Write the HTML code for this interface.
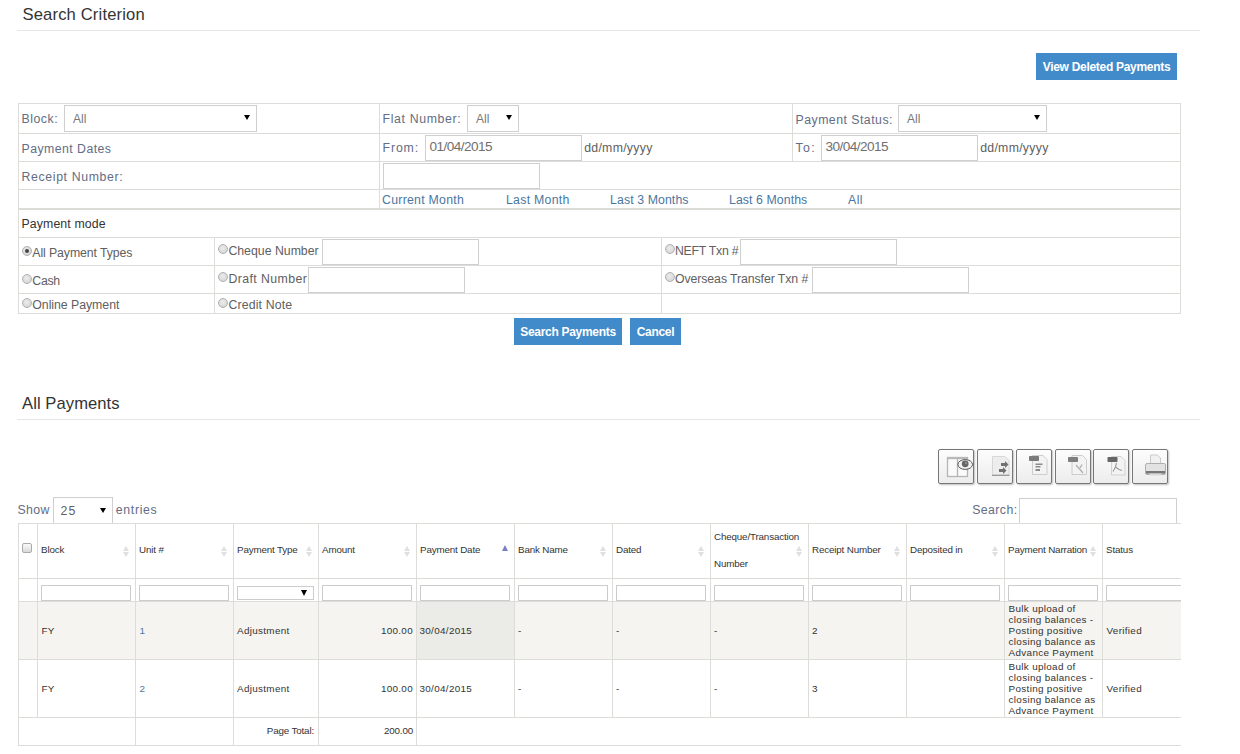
<!DOCTYPE html>
<html><head><meta charset="utf-8"><style>
html,body{margin:0;padding:0;background:#fff;width:1240px;height:754px;overflow:hidden;position:relative}
body{font-family:"Liberation Sans",sans-serif}
.t{position:absolute;white-space:nowrap}
.b{position:absolute;box-sizing:content-box}
.radio{width:8px;height:8px;border-radius:50%;border:1px solid #b0b0b0;background:radial-gradient(circle at 45% 40%,#ececec,#cfcfcf)}
.cbox{width:8px;height:8px;border-radius:2px;border:1px solid #aaa;background:linear-gradient(#fafafa,#d9d9d9)}
.tbtn{width:34px;height:33px;border:1px solid #777;border-radius:2px;background:linear-gradient(#fdfdfd,#ececec);box-shadow:1px 1px 2px rgba(0,0,0,.25)}
</style></head><body>
<div class="t" style="left:22.5px;top:6.95px;font-size:16.6px;line-height:16.6px;color:#333;font-weight:400;letter-spacing:0.15px;">Search Criterion</div>
<div class="b" style="left:17px;top:30px;width:1183px;height:1px;background:#e6e6e6"></div>
<div class="b" style="left:1036px;top:53px;width:141px;height:27px;background:#428bca;"></div>
<div class="t" style="left:1036px;width:141px;text-align:center;top:60.84px;font-size:12px;line-height:12px;color:#fff;font-weight:700;letter-spacing:-0.3px">View Deleted Payments</div>
<div class="b" style="left:18px;top:103px;width:1163px;height:1px;background:#dcdcd8"></div>
<div class="b" style="left:18px;top:133px;width:1163px;height:1px;background:#dcdcd8"></div>
<div class="b" style="left:18px;top:161px;width:1163px;height:1px;background:#dcdcd8"></div>
<div class="b" style="left:18px;top:189px;width:1163px;height:1px;background:#dcdcd8"></div>
<div class="b" style="left:18px;top:208px;width:1163px;height:2px;background:#dcdcd6"></div>
<div class="b" style="left:18px;top:237px;width:1163px;height:1px;background:#dcdcd8"></div>
<div class="b" style="left:18px;top:265px;width:1163px;height:1px;background:#dcdcd8"></div>
<div class="b" style="left:18px;top:293px;width:1163px;height:1px;background:#dcdcd8"></div>
<div class="b" style="left:18px;top:313px;width:1163px;height:1px;background:#dcdcd8"></div>
<div class="b" style="left:18px;top:103px;width:1px;height:211px;background:#dcdcd8"></div>
<div class="b" style="left:1180px;top:103px;width:1px;height:211px;background:#dcdcd8"></div>
<div class="b" style="left:379px;top:103px;width:1px;height:105px;background:#dcdcd8"></div>
<div class="b" style="left:792px;top:103px;width:1px;height:58px;background:#dcdcd8"></div>
<div class="b" style="left:214px;top:237px;width:1px;height:76px;background:#dcdcd8"></div>
<div class="b" style="left:661px;top:237px;width:1px;height:76px;background:#dcdcd8"></div>
<div class="t" style="left:21.6px;top:112.59px;font-size:12.3px;line-height:12.3px;color:#636d84;font-weight:400;letter-spacing:0.5px;">Block:</div>
<div class="b" style="left:64px;top:105px;width:191px;height:25px;border:1px solid #cfcfcf;background:#fff;"></div>
<div class="t" style="left:73px;top:112.54px;font-size:12px;line-height:12px;color:#777;font-weight:400;letter-spacing:0px;">All</div>
<div class="b" style="left:244.0px;top:115px;width:0;height:0;border-left:3.0px solid transparent;border-right:3.0px solid transparent;border-top:5px solid #000"></div>
<div class="t" style="left:382.6px;top:112.59px;font-size:12.3px;line-height:12.3px;color:#636d84;font-weight:400;letter-spacing:0.641px;">Flat Number:</div>
<div class="b" style="left:467px;top:105px;width:50px;height:25px;border:1px solid #cfcfcf;background:#fff;"></div>
<div class="t" style="left:476px;top:112.54px;font-size:12px;line-height:12px;color:#777;font-weight:400;letter-spacing:0px;">All</div>
<div class="b" style="left:506.0px;top:115px;width:0;height:0;border-left:3.0px solid transparent;border-right:3.0px solid transparent;border-top:5px solid #000"></div>
<div class="t" style="left:795.5px;top:113.59px;font-size:12.3px;line-height:12.3px;color:#636d84;font-weight:400;letter-spacing:0.481px;">Payment Status:</div>
<div class="b" style="left:898px;top:105px;width:147px;height:25px;border:1px solid #cfcfcf;background:#fff;"></div>
<div class="t" style="left:907px;top:112.54px;font-size:12px;line-height:12px;color:#777;font-weight:400;letter-spacing:0px;">All</div>
<div class="b" style="left:1034.0px;top:115px;width:0;height:0;border-left:3.0px solid transparent;border-right:3.0px solid transparent;border-top:5px solid #000"></div>
<div class="t" style="left:21.5px;top:142.59px;font-size:12.3px;line-height:12.3px;color:#636d84;font-weight:400;letter-spacing:0.453px;">Payment Dates</div>
<div class="t" style="left:382.6px;top:141.59px;font-size:12.3px;line-height:12.3px;color:#636d84;font-weight:400;letter-spacing:0.85px;">From:</div>
<div class="b" style="left:425px;top:135px;width:155px;height:24px;border:1px solid #cfcfcf;background:#fff;"></div>
<div class="t" style="left:429.4px;top:140.29px;font-size:13.6px;line-height:13.6px;color:#707070;font-weight:400;letter-spacing:-0.55px;">01/04/2015</div>
<div class="t" style="left:584.2px;top:141.59px;font-size:12.3px;line-height:12.3px;color:#606060;font-weight:400;letter-spacing:0.281px;">dd/mm/yyyy</div>
<div class="t" style="left:795.5px;top:141.59px;font-size:12.3px;line-height:12.3px;color:#636d84;font-weight:400;letter-spacing:1.4px;">To:</div>
<div class="b" style="left:821px;top:135px;width:155px;height:24px;border:1px solid #cfcfcf;background:#fff;"></div>
<div class="t" style="left:825.4px;top:140.29px;font-size:13.6px;line-height:13.6px;color:#707070;font-weight:400;letter-spacing:-0.55px;">30/04/2015</div>
<div class="t" style="left:980.2px;top:141.59px;font-size:12.3px;line-height:12.3px;color:#606060;font-weight:400;letter-spacing:0.281px;">dd/mm/yyyy</div>
<div class="t" style="left:21.5px;top:170.59px;font-size:12.3px;line-height:12.3px;color:#636d84;font-weight:400;letter-spacing:0.641px;">Receipt Number:</div>
<div class="b" style="left:383px;top:163px;width:155px;height:24px;border:1px solid #cfcfcf;background:#fff;"></div>
<div class="t" style="left:382px;top:194.29px;font-size:12.3px;line-height:12.3px;color:#4a77a1;font-weight:400;letter-spacing:0.273px;">Current Month</div>
<div class="t" style="left:506px;top:194.29px;font-size:12.3px;line-height:12.3px;color:#4a77a1;font-weight:400;letter-spacing:0.281px;">Last Month</div>
<div class="t" style="left:610px;top:194.29px;font-size:12.3px;line-height:12.3px;color:#4a77a1;font-weight:400;letter-spacing:0.103px;">Last 3 Months</div>
<div class="t" style="left:729px;top:194.29px;font-size:12.3px;line-height:12.3px;color:#4a77a1;font-weight:400;letter-spacing:0.083px;">Last 6 Months</div>
<div class="t" style="left:848px;top:194.29px;font-size:12.3px;line-height:12.3px;color:#4a77a1;font-weight:400;letter-spacing:0.45px;">All</div>
<div class="t" style="left:21.4px;top:218.09px;font-size:12.3px;line-height:12.3px;color:#333;font-weight:400;letter-spacing:0.141px;">Payment mode</div>
<div class="b radio" style="left:22px;top:246px"></div>
<div class="b" style="left:25px;top:249px;width:4px;height:4px;border-radius:50%;background:#444"></div>
<div class="t" style="left:32.3px;top:247.19px;font-size:12.3px;line-height:12.3px;color:#606060;font-weight:400;letter-spacing:-0.098px;">All Payment Types</div>
<div class="b radio" style="left:218px;top:244px"></div>
<div class="t" style="left:228.4px;top:244.89px;font-size:12.3px;line-height:12.3px;color:#606060;font-weight:400;letter-spacing:0.003px;">Cheque Number</div>
<div class="b" style="left:322px;top:239px;width:155px;height:24px;border:1px solid #cfcfcf;background:#fff;"></div>
<div class="b radio" style="left:665px;top:244px"></div>
<div class="t" style="left:675px;top:244.89px;font-size:12.3px;line-height:12.3px;color:#606060;font-weight:400;letter-spacing:-0.259px;">NEFT Txn #</div>
<div class="b" style="left:740px;top:239px;width:155px;height:24px;border:1px solid #cfcfcf;background:#fff;"></div>
<div class="b radio" style="left:22px;top:274px"></div>
<div class="t" style="left:32.3px;top:274.89px;font-size:12.3px;line-height:12.3px;color:#606060;font-weight:400;letter-spacing:-0.267px;">Cash</div>
<div class="b radio" style="left:218px;top:272px"></div>
<div class="t" style="left:228.4px;top:272.89px;font-size:12.3px;line-height:12.3px;color:#606060;font-weight:400;letter-spacing:0.421px;">Draft Number</div>
<div class="b" style="left:308px;top:267px;width:155px;height:24px;border:1px solid #cfcfcf;background:#fff;"></div>
<div class="b radio" style="left:665px;top:272px"></div>
<div class="t" style="left:675px;top:272.89px;font-size:12.3px;line-height:12.3px;color:#606060;font-weight:400;letter-spacing:-0.085px;">Overseas Transfer Txn #</div>
<div class="b" style="left:812px;top:267px;width:155px;height:24px;border:1px solid #cfcfcf;background:#fff;"></div>
<div class="b radio" style="left:22px;top:298px"></div>
<div class="t" style="left:32.3px;top:298.59px;font-size:12.3px;line-height:12.3px;color:#606060;font-weight:400;letter-spacing:-0.033px;">Online Payment</div>
<div class="b radio" style="left:218px;top:298px"></div>
<div class="t" style="left:228.4px;top:298.59px;font-size:12.3px;line-height:12.3px;color:#606060;font-weight:400;letter-spacing:0.15px;">Credit Note</div>
<div class="b" style="left:514px;top:318px;width:108px;height:27px;background:#428bca;"></div>
<div class="t" style="left:514px;width:108px;text-align:center;top:325.54px;font-size:12px;line-height:12px;color:#fff;font-weight:700;letter-spacing:-0.3px">Search Payments</div>
<div class="b" style="left:630px;top:318px;width:51px;height:27px;background:#428bca;"></div>
<div class="t" style="left:630px;width:51px;text-align:center;top:325.54px;font-size:12px;line-height:12px;color:#fff;font-weight:700;letter-spacing:-0.3px">Cancel</div>
<div class="t" style="left:22px;top:395.75px;font-size:16.6px;line-height:16.6px;color:#333;font-weight:400;letter-spacing:0.07px;">All Payments</div>
<div class="b" style="left:17px;top:419px;width:1183px;height:1px;background:#e6e6e6"></div>
<div class="b tbtn" style="left:938px;top:449px"></div>
<svg class="b" style="left:938px;top:449px" width="36" height="35" viewBox="0 0 36 35"><rect x="9.5" y="8.5" width="20" height="19" fill="#fafafa" stroke="#b5b5b5" stroke-width="1.3"/><rect x="9" y="8" width="21" height="2.2" fill="#b8b8b8"/><line x1="19.5" y1="9" x2="19.5" y2="27" stroke="#b5b5b5" stroke-width="1.3"/><ellipse cx="27.2" cy="15.5" rx="7.3" ry="4.9" fill="#f2f2f2" stroke="#555" stroke-width="1"/><circle cx="27.2" cy="14.8" r="3.4" fill="#666"/><circle cx="28" cy="14" r="1" fill="#999"/></svg>
<div class="b tbtn" style="left:977px;top:449px"></div>
<svg class="b" style="left:977px;top:449px" width="36" height="35" viewBox="0 0 36 35"><path d="M15.5 7.5 H28 L32 11.5 V26 H15.5 Z" fill="#ededed" stroke="#cfcfcf" stroke-width="0.8"/><line x1="15" y1="26.3" x2="32.5" y2="26.3" stroke="#888" stroke-width="1"/><path d="M24 14 h4 v-2 l3.5 3.5 -3.5 3.5 v-2 h-4z" fill="#707070"/><path d="M22 20 h4 v-2 l3.5 3.5 -3.5 3.5 v-2 h-4z" fill="#707070"/></svg>
<div class="b tbtn" style="left:1016px;top:449px"></div>
<svg class="b" style="left:1016px;top:449px" width="36" height="35" viewBox="0 0 36 35"><path d="M16.5 6.5 H27 L31 10.5 V25.5 H16.5 Z" fill="#f3f3f3" stroke="#c8c8c8" stroke-width="0.9"/><rect x="13" y="7" width="10" height="5" rx="0.8" fill="#7a7a7a"/><rect x="19.5" y="14.5" width="7" height="1.5" fill="#8a8a8a"/><rect x="19.5" y="17" width="5" height="1.5" fill="#8a8a8a"/><rect x="19.5" y="20" width="4.5" height="2" fill="#8a8a8a"/></svg>
<div class="b tbtn" style="left:1055px;top:449px"></div>
<svg class="b" style="left:1055px;top:449px" width="36" height="35" viewBox="0 0 36 35"><path d="M17 6.5 H27.5 L31.5 10.5 V25.5 H17 Z" fill="#f3f3f3" stroke="#c8c8c8" stroke-width="0.9"/><rect x="13" y="8" width="10" height="5" rx="0.8" fill="#7f7f7f"/><path d="M21 16 L28 24 M27 15.5 L25 19" stroke="#b0b0b0" stroke-width="1.3" fill="none"/></svg>
<div class="b tbtn" style="left:1093px;top:449px"></div>
<svg class="b" style="left:1093px;top:449px" width="36" height="35" viewBox="0 0 36 35"><path d="M18.5 7.5 H28 L32 11.5 V26 H18.5 Z" fill="#f3f3f3" stroke="#cdcdcd" stroke-width="0.9"/><rect x="14.5" y="8" width="10" height="5" rx="0.8" fill="#666"/><path d="M23.5 14 L22.5 18 L20 22.5 M22.5 18 L26 20.5 L29 21.5" stroke="#9a9a9a" stroke-width="1.1" fill="none"/></svg>
<div class="b tbtn" style="left:1132px;top:449px"></div>
<svg class="b" style="left:1132px;top:449px" width="36" height="35" viewBox="0 0 36 35"><path d="M18.5 6 H25.5 L28.5 9 V15 H18.5 Z" fill="#f0f0f0" stroke="#c6c6c6" stroke-width="0.9"/><path d="M15 14.5 H32.5 Q33.5 14.5 33.5 16 V24 Q33.5 25.5 32 25.5 H15 Q13.5 25.5 13.5 24 V16 Q13.5 14.5 15 14.5 Z" fill="#e2e2e2" stroke="#a8a8a8" stroke-width="0.9"/><rect x="14" y="22" width="19" height="2.6" fill="#777"/><rect x="17.5" y="24.5" width="12" height="2" fill="#d8d8d8"/></svg>
<div class="t" style="left:17.4px;top:503.59px;font-size:12.3px;line-height:12.3px;color:#636d84;font-weight:400;letter-spacing:0.433px;">Show</div>
<div class="b" style="left:53px;top:497px;width:58px;height:25px;border:1px solid #cfcfcf;background:#fff;"></div>
<div class="t" style="left:60.6px;top:504.59px;font-size:12.3px;line-height:12.3px;color:#606060;font-weight:400;letter-spacing:1.0px;">25</div>
<div class="b" style="left:100.0px;top:508px;width:0;height:0;border-left:3.0px solid transparent;border-right:3.0px solid transparent;border-top:5px solid #000"></div>
<div class="t" style="left:115.8px;top:503.59px;font-size:12.3px;line-height:12.3px;color:#636d84;font-weight:400;letter-spacing:0.667px;">entries</div>
<div class="t" style="left:972.2px;top:503.59px;font-size:12.3px;line-height:12.3px;color:#636d84;font-weight:400;letter-spacing:0.417px;">Search:</div>
<div class="b" style="left:1019px;top:498px;width:156px;height:24px;border:1px solid #cfcfcf;background:#fff;"></div>
<div class="b" style="left:18px;top:601px;width:1163px;height:58px;background:#f5f4f0;"></div>
<div class="b" style="left:416px;top:601px;width:98px;height:58px;background:#ebebe7;"></div>
<div class="b" style="left:18px;top:523px;width:1163px;height:1px;background:#dcdcd8"></div>
<div class="b" style="left:18px;top:578px;width:1163px;height:1px;background:#dcdcd8"></div>
<div class="b" style="left:18px;top:601px;width:1163px;height:1px;background:#dcdcd8"></div>
<div class="b" style="left:18px;top:659px;width:1163px;height:1px;background:#dcdcd8"></div>
<div class="b" style="left:18px;top:717px;width:1163px;height:1px;background:#dcdcd8"></div>
<div class="b" style="left:18px;top:745px;width:1169px;height:1px;background:#dcdcd8"></div>
<div class="b" style="left:18px;top:523px;width:1px;height:194px;background:#dcdcd8"></div>
<div class="b" style="left:37px;top:523px;width:1px;height:194px;background:#dcdcd8"></div>
<div class="b" style="left:135px;top:523px;width:1px;height:194px;background:#dcdcd8"></div>
<div class="b" style="left:233px;top:523px;width:1px;height:194px;background:#dcdcd8"></div>
<div class="b" style="left:318px;top:523px;width:1px;height:194px;background:#dcdcd8"></div>
<div class="b" style="left:416px;top:523px;width:1px;height:194px;background:#dcdcd8"></div>
<div class="b" style="left:514px;top:523px;width:1px;height:194px;background:#dcdcd8"></div>
<div class="b" style="left:612px;top:523px;width:1px;height:194px;background:#dcdcd8"></div>
<div class="b" style="left:710px;top:523px;width:1px;height:194px;background:#dcdcd8"></div>
<div class="b" style="left:808px;top:523px;width:1px;height:194px;background:#dcdcd8"></div>
<div class="b" style="left:906px;top:523px;width:1px;height:194px;background:#dcdcd8"></div>
<div class="b" style="left:1004px;top:523px;width:1px;height:194px;background:#dcdcd8"></div>
<div class="b" style="left:1102px;top:523px;width:1px;height:194px;background:#dcdcd8"></div>
<div class="b" style="left:18px;top:717px;width:1px;height:29px;background:#dcdcd8"></div>
<div class="b" style="left:135px;top:717px;width:1px;height:29px;background:#dcdcd8"></div>
<div class="b" style="left:233px;top:717px;width:1px;height:29px;background:#dcdcd8"></div>
<div class="b" style="left:318px;top:717px;width:1px;height:29px;background:#dcdcd8"></div>
<div class="b" style="left:416px;top:717px;width:1px;height:29px;background:#dcdcd8"></div>
<div class="t" style="left:41px;top:545.40px;font-size:9.8px;line-height:9.8px;color:#333;font-weight:400;letter-spacing:-0.15px;">Block</div>
<div class="t" style="left:139px;top:545.40px;font-size:9.8px;line-height:9.8px;color:#333;font-weight:400;letter-spacing:-0.15px;">Unit #</div>
<div class="t" style="left:237px;top:545.40px;font-size:9.8px;line-height:9.8px;color:#333;font-weight:400;letter-spacing:-0.15px;">Payment Type</div>
<div class="t" style="left:322px;top:545.40px;font-size:9.8px;line-height:9.8px;color:#333;font-weight:400;letter-spacing:-0.15px;">Amount</div>
<div class="t" style="left:420px;top:545.40px;font-size:9.8px;line-height:9.8px;color:#333;font-weight:400;letter-spacing:-0.15px;">Payment Date</div>
<div class="t" style="left:518px;top:545.40px;font-size:9.8px;line-height:9.8px;color:#333;font-weight:400;letter-spacing:-0.15px;">Bank Name</div>
<div class="t" style="left:616px;top:545.40px;font-size:9.8px;line-height:9.8px;color:#333;font-weight:400;letter-spacing:-0.15px;">Dated</div>
<div class="t" style="left:714px;top:532.20px;font-size:9.8px;line-height:9.8px;color:#333;font-weight:400;letter-spacing:-0.15px;">Cheque/Transaction</div>
<div class="t" style="left:714px;top:559.20px;font-size:9.8px;line-height:9.8px;color:#333;font-weight:400;letter-spacing:-0.15px;">Number</div>
<div class="t" style="left:812px;top:545.40px;font-size:9.8px;line-height:9.8px;color:#333;font-weight:400;letter-spacing:-0.15px;">Receipt Number</div>
<div class="t" style="left:910px;top:545.40px;font-size:9.8px;line-height:9.8px;color:#333;font-weight:400;letter-spacing:-0.15px;">Deposited in</div>
<div class="t" style="left:1008px;top:545.40px;font-size:9.8px;line-height:9.8px;color:#333;font-weight:400;letter-spacing:-0.15px;">Payment Narration</div>
<div class="t" style="left:1106px;top:545.40px;font-size:9.8px;line-height:9.8px;color:#333;font-weight:400;letter-spacing:-0.15px;">Status</div>
<div class="b cbox" style="left:22px;top:543px"></div>
<div class="b" style="left:123px;top:546px;width:0;height:0;border-left:3.5px solid transparent;border-right:3.5px solid transparent;border-bottom:5px solid #e0e0e0"></div>
<div class="b" style="left:123px;top:552px;width:0;height:0;border-left:3.5px solid transparent;border-right:3.5px solid transparent;border-top:5px solid #e0e0e0"></div>
<div class="b" style="left:221px;top:546px;width:0;height:0;border-left:3.5px solid transparent;border-right:3.5px solid transparent;border-bottom:5px solid #e0e0e0"></div>
<div class="b" style="left:221px;top:552px;width:0;height:0;border-left:3.5px solid transparent;border-right:3.5px solid transparent;border-top:5px solid #e0e0e0"></div>
<div class="b" style="left:306px;top:546px;width:0;height:0;border-left:3.5px solid transparent;border-right:3.5px solid transparent;border-bottom:5px solid #e0e0e0"></div>
<div class="b" style="left:306px;top:552px;width:0;height:0;border-left:3.5px solid transparent;border-right:3.5px solid transparent;border-top:5px solid #e0e0e0"></div>
<div class="b" style="left:404px;top:546px;width:0;height:0;border-left:3.5px solid transparent;border-right:3.5px solid transparent;border-bottom:5px solid #e0e0e0"></div>
<div class="b" style="left:404px;top:552px;width:0;height:0;border-left:3.5px solid transparent;border-right:3.5px solid transparent;border-top:5px solid #e0e0e0"></div>
<div class="b" style="left:502px;top:545px;width:0;height:0;border-left:3.5px solid transparent;border-right:3.5px solid transparent;border-bottom:6px solid #7b7fc4"></div>
<div class="b" style="left:600px;top:546px;width:0;height:0;border-left:3.5px solid transparent;border-right:3.5px solid transparent;border-bottom:5px solid #e0e0e0"></div>
<div class="b" style="left:600px;top:552px;width:0;height:0;border-left:3.5px solid transparent;border-right:3.5px solid transparent;border-top:5px solid #e0e0e0"></div>
<div class="b" style="left:698px;top:546px;width:0;height:0;border-left:3.5px solid transparent;border-right:3.5px solid transparent;border-bottom:5px solid #e0e0e0"></div>
<div class="b" style="left:698px;top:552px;width:0;height:0;border-left:3.5px solid transparent;border-right:3.5px solid transparent;border-top:5px solid #e0e0e0"></div>
<div class="b" style="left:796px;top:546px;width:0;height:0;border-left:3.5px solid transparent;border-right:3.5px solid transparent;border-bottom:5px solid #e0e0e0"></div>
<div class="b" style="left:796px;top:552px;width:0;height:0;border-left:3.5px solid transparent;border-right:3.5px solid transparent;border-top:5px solid #e0e0e0"></div>
<div class="b" style="left:894px;top:546px;width:0;height:0;border-left:3.5px solid transparent;border-right:3.5px solid transparent;border-bottom:5px solid #e0e0e0"></div>
<div class="b" style="left:894px;top:552px;width:0;height:0;border-left:3.5px solid transparent;border-right:3.5px solid transparent;border-top:5px solid #e0e0e0"></div>
<div class="b" style="left:992px;top:546px;width:0;height:0;border-left:3.5px solid transparent;border-right:3.5px solid transparent;border-bottom:5px solid #e0e0e0"></div>
<div class="b" style="left:992px;top:552px;width:0;height:0;border-left:3.5px solid transparent;border-right:3.5px solid transparent;border-top:5px solid #e0e0e0"></div>
<div class="b" style="left:1090px;top:546px;width:0;height:0;border-left:3.5px solid transparent;border-right:3.5px solid transparent;border-bottom:5px solid #e0e0e0"></div>
<div class="b" style="left:1090px;top:552px;width:0;height:0;border-left:3.5px solid transparent;border-right:3.5px solid transparent;border-top:5px solid #e0e0e0"></div>
<div class="b" style="left:41px;top:585px;width:88px;height:14px;border:1px solid #ccc;background:#fff;"></div>
<div class="b" style="left:139px;top:585px;width:88px;height:14px;border:1px solid #ccc;background:#fff;"></div>
<div class="b" style="left:237px;top:586px;width:75px;height:12px;border:1px solid #ccc;background:#fff;"></div>
<div class="b" style="left:301.0px;top:590px;width:0;height:0;border-left:3.0px solid transparent;border-right:3.0px solid transparent;border-top:6px solid #000"></div>
<div class="b" style="left:322px;top:585px;width:88px;height:14px;border:1px solid #ccc;background:#fff;"></div>
<div class="b" style="left:420px;top:585px;width:88px;height:14px;border:1px solid #ccc;background:#fff;"></div>
<div class="b" style="left:518px;top:585px;width:88px;height:14px;border:1px solid #ccc;background:#fff;"></div>
<div class="b" style="left:616px;top:585px;width:88px;height:14px;border:1px solid #ccc;background:#fff;"></div>
<div class="b" style="left:714px;top:585px;width:88px;height:14px;border:1px solid #ccc;background:#fff;"></div>
<div class="b" style="left:812px;top:585px;width:88px;height:14px;border:1px solid #ccc;background:#fff;"></div>
<div class="b" style="left:910px;top:585px;width:88px;height:14px;border:1px solid #ccc;background:#fff;"></div>
<div class="b" style="left:1008px;top:585px;width:88px;height:14px;border:1px solid #ccc;background:#fff;"></div>
<div class="b" style="left:1106px;top:585px;width:98px;height:14px;border:1px solid #ccc;background:#fff;"></div>
<div class="b" style="left:1181px;top:520px;width:59px;height:230px;background:#fff;"></div>
<div class="t" style="left:41.5px;top:625.82px;font-size:9.9px;line-height:9.9px;color:#333;font-weight:400;letter-spacing:0.32px;">FY</div>
<div class="t" style="left:139.4px;top:625.82px;font-size:9.9px;line-height:9.9px;color:#4a77a1;font-weight:400;letter-spacing:0.32px;">1</div>
<div class="t" style="left:237px;top:625.82px;font-size:9.9px;line-height:9.9px;color:#333;font-weight:400;letter-spacing:0.32px;">Adjustment</div>
<div class="t" style="right:827px;top:625.82px;font-size:9.9px;line-height:9.9px;color:#333;font-weight:400;letter-spacing:0.32px;text-align:right">100.00</div>
<div class="t" style="left:419.5px;top:625.82px;font-size:9.9px;line-height:9.9px;color:#333;font-weight:400;letter-spacing:0.32px;">30/04/2015</div>
<div class="t" style="left:518px;top:625.82px;font-size:9.9px;line-height:9.9px;color:#333;font-weight:400;letter-spacing:0.32px;">-</div>
<div class="t" style="left:616px;top:625.82px;font-size:9.9px;line-height:9.9px;color:#333;font-weight:400;letter-spacing:0.32px;">-</div>
<div class="t" style="left:714px;top:625.82px;font-size:9.9px;line-height:9.9px;color:#333;font-weight:400;letter-spacing:0.32px;">-</div>
<div class="t" style="left:812px;top:625.82px;font-size:9.9px;line-height:9.9px;color:#333;font-weight:400;letter-spacing:0.32px;">2</div>
<div class="t" style="left:1008.6px;top:603.62px;font-size:9.9px;line-height:9.9px;color:#333;font-weight:400;letter-spacing:0.32px;">Bulk upload of</div>
<div class="t" style="left:1008.6px;top:614.62px;font-size:9.9px;line-height:9.9px;color:#333;font-weight:400;letter-spacing:0.32px;">closing balances -</div>
<div class="t" style="left:1008.6px;top:625.62px;font-size:9.9px;line-height:9.9px;color:#333;font-weight:400;letter-spacing:0.32px;">Posting positive</div>
<div class="t" style="left:1008.6px;top:636.62px;font-size:9.9px;line-height:9.9px;color:#333;font-weight:400;letter-spacing:0.32px;">closing balance as</div>
<div class="t" style="left:1008.6px;top:647.62px;font-size:9.9px;line-height:9.9px;color:#333;font-weight:400;letter-spacing:0.32px;">Advance Payment</div>
<div class="t" style="left:1106.5px;top:625.82px;font-size:9.9px;line-height:9.9px;color:#333;font-weight:400;letter-spacing:0.32px;">Verified</div>
<div class="t" style="left:41.5px;top:683.82px;font-size:9.9px;line-height:9.9px;color:#333;font-weight:400;letter-spacing:0.32px;">FY</div>
<div class="t" style="left:139.4px;top:683.82px;font-size:9.9px;line-height:9.9px;color:#4a77a1;font-weight:400;letter-spacing:0.32px;">2</div>
<div class="t" style="left:237px;top:683.82px;font-size:9.9px;line-height:9.9px;color:#333;font-weight:400;letter-spacing:0.32px;">Adjustment</div>
<div class="t" style="right:827px;top:683.82px;font-size:9.9px;line-height:9.9px;color:#333;font-weight:400;letter-spacing:0.32px;text-align:right">100.00</div>
<div class="t" style="left:419.5px;top:683.82px;font-size:9.9px;line-height:9.9px;color:#333;font-weight:400;letter-spacing:0.32px;">30/04/2015</div>
<div class="t" style="left:518px;top:683.82px;font-size:9.9px;line-height:9.9px;color:#333;font-weight:400;letter-spacing:0.32px;">-</div>
<div class="t" style="left:616px;top:683.82px;font-size:9.9px;line-height:9.9px;color:#333;font-weight:400;letter-spacing:0.32px;">-</div>
<div class="t" style="left:714px;top:683.82px;font-size:9.9px;line-height:9.9px;color:#333;font-weight:400;letter-spacing:0.32px;">-</div>
<div class="t" style="left:812px;top:683.82px;font-size:9.9px;line-height:9.9px;color:#333;font-weight:400;letter-spacing:0.32px;">3</div>
<div class="t" style="left:1008.6px;top:661.62px;font-size:9.9px;line-height:9.9px;color:#333;font-weight:400;letter-spacing:0.32px;">Bulk upload of</div>
<div class="t" style="left:1008.6px;top:672.62px;font-size:9.9px;line-height:9.9px;color:#333;font-weight:400;letter-spacing:0.32px;">closing balances -</div>
<div class="t" style="left:1008.6px;top:683.62px;font-size:9.9px;line-height:9.9px;color:#333;font-weight:400;letter-spacing:0.32px;">Posting positive</div>
<div class="t" style="left:1008.6px;top:694.62px;font-size:9.9px;line-height:9.9px;color:#333;font-weight:400;letter-spacing:0.32px;">closing balance as</div>
<div class="t" style="left:1008.6px;top:705.62px;font-size:9.9px;line-height:9.9px;color:#333;font-weight:400;letter-spacing:0.32px;">Advance Payment</div>
<div class="t" style="left:1106.5px;top:683.82px;font-size:9.9px;line-height:9.9px;color:#333;font-weight:400;letter-spacing:0.32px;">Verified</div>
<div class="t" style="right:926px;top:726.40px;font-size:9.8px;line-height:9.8px;color:#333;font-weight:400;letter-spacing:-0.15px;text-align:right">Page Total:</div>
<div class="t" style="right:827px;top:726.40px;font-size:9.8px;line-height:9.8px;color:#333;font-weight:400;letter-spacing:-0.15px;text-align:right">200.00</div>
</body></html>
